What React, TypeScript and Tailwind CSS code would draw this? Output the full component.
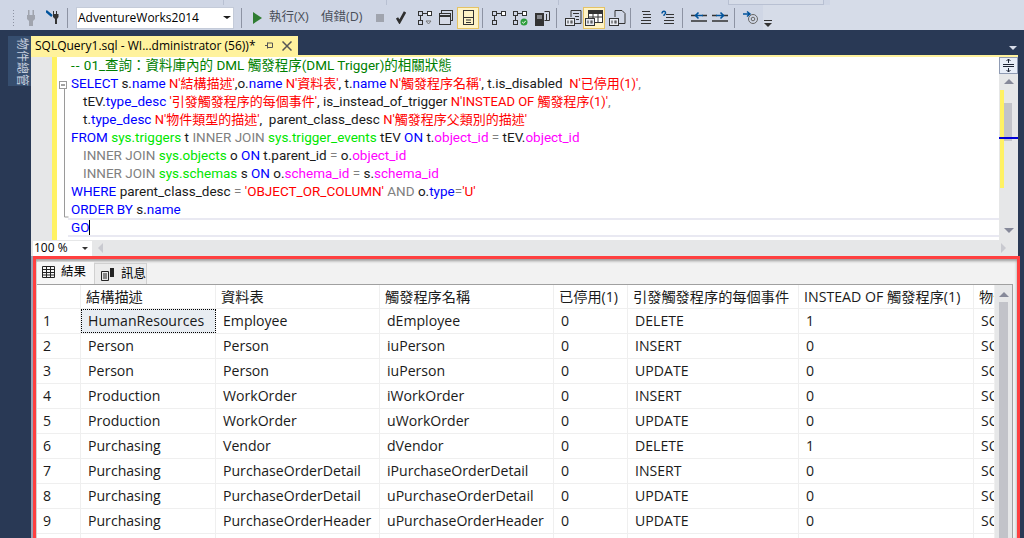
const FONT = "font-['Open_Sans','Noto_Sans_CJK_TC',sans-serif]";

type Tok = [string, string];

const B = "text-[#0000ff]";
const R = "text-[#ff0000]";
const RC = "text-[#ff0000] text-[13px]";
const G = "text-[#00e600]";
const M = "text-[#ff00ff]";
const K = "text-[#1a1a1a]";
const Y = "text-[#808080]";
const C = "text-[#008000]";

const sqlLines: { indent?: boolean; toks: Tok[] }[] = [
  { toks: [["--", "text-[#008000] tracking-[1px]"], [" 01_查詢：資料庫內的 DML 觸發程序(DML Trigger)的相關狀態", C]] },
  {
    toks: [
      ["SELECT", B], [" s.", K], ["name", B], [" N'結構描述'", RC], [",o.", K], ["name", B], [" N'資料表'", RC], [", t.", K],
      ["name", B], [" N'觸發程序名稱'", RC], [", t.is_disabled  ", K], ["N'已停用(1)'", RC], [",", Y],
    ],
  },
  {
    indent: true,
    toks: [
      ["tEV.", K], ["type_desc", B], [" '引發觸發程序的每個事件'", RC], [", is_instead_of_trigger ", K],
      ["N'INSTEAD OF 觸發程序(1)'", RC], [",", Y],
    ],
  },
  {
    indent: true,
    toks: [
      ["t.", K], ["type_desc", B], [" N'物件類型的描述'", RC], [",  parent_class_desc ", K], ["N'觸發程序父類別的描述'", RC],
    ],
  },
  {
    toks: [
      ["FROM", B], [" ", K], ["sys.triggers", G], [" t ", K], ["INNER JOIN", Y], [" ", K], ["sys.trigger_events", G], [" tEV ", K],
      ["ON", B], [" t.", K], ["object_id", M], [" = ", Y], ["tEV.", K], ["object_id", M],
    ],
  },
  {
    indent: true,
    toks: [
      ["INNER JOIN", Y], [" ", K], ["sys.objects", G], [" o ", K], ["ON", B], [" t.parent_id ", K], ["=", Y], [" o.", K], ["object_id", M],
    ],
  },
  {
    indent: true,
    toks: [
      ["INNER JOIN", Y], [" ", K], ["sys.schemas", G], [" s ", K], ["ON", B], [" o.", K], ["schema_id", M], [" = ", Y], ["s.", K], ["schema_id", M],
    ],
  },
  {
    toks: [
      ["WHERE", B], [" parent_class_desc ", K], ["=", Y], [" ", K], ["'OBJECT_OR_COLUMN'", R], [" AND ", Y], ["o.", K], ["type", B], ["=", Y], ["'U'", R],
    ],
  },
  { toks: [["ORDER BY", B], [" s.", K], ["name", B]] },
];

const columns = [
  { w: "w-[44px]", label: "" },
  { w: "w-[135px]", label: "結構描述" },
  { w: "w-[164px]", label: "資料表" },
  { w: "w-[174px]", label: "觸發程序名稱" },
  { w: "w-[74px]", label: "已停用(1)" },
  { w: "w-[171px]", label: "引發觸發程序的每個事件" },
  { w: "w-[175px]", label: "INSTEAD OF 觸發程序(1)" },
  { w: "w-[21px]", label: "物件類型的描述" },
];

const rows = [
  ["1", "HumanResources", "Employee", "dEmployee", "0", "DELETE", "1", "SQL"],
  ["2", "Person", "Person", "iuPerson", "0", "INSERT", "0", "SQL"],
  ["3", "Person", "Person", "iuPerson", "0", "UPDATE", "0", "SQL"],
  ["4", "Production", "WorkOrder", "iWorkOrder", "0", "INSERT", "0", "SQL"],
  ["5", "Production", "WorkOrder", "uWorkOrder", "0", "UPDATE", "0", "SQL"],
  ["6", "Purchasing", "Vendor", "dVendor", "0", "DELETE", "1", "SQL"],
  ["7", "Purchasing", "PurchaseOrderDetail", "iPurchaseOrderDetail", "0", "INSERT", "0", "SQL"],
  ["8", "Purchasing", "PurchaseOrderDetail", "uPurchaseOrderDetail", "0", "UPDATE", "0", "SQL"],
  ["9", "Purchasing", "PurchaseOrderHeader", "uPurchaseOrderHeader", "0", "UPDATE", "0", "SQL"],
  ["", "", "", "", "", "", "", ""],
];

function Sep({ ml }: { ml: string }) {
  return <div className={`${ml} h-[20px] w-px bg-[#8d93a3] shrink-0`} />;
}

function Plan({ check, shield }: { check?: boolean; shield?: boolean }) {
  return (
    <svg width="16" height="16" viewBox="0 0 16 16" fill="none" stroke="#333" strokeWidth="1">
      <rect x="1.5" y="1.5" width="4" height="4" />
      <rect x="10.5" y="1.5" width="4" height="4" fill="#fff" />
      <rect x="1.5" y="10.5" width="4" height="4" />
      <path d="M5.5 3.5h5M3.5 5.5v5" />
      {shield && <path d="M9 11h5l-2.5 3z" stroke="#777" />}
      {check && <circle cx="12" cy="12" r="3.5" fill="#2e9e3c" stroke="none" />}
      {check && <path d="M10.2 12l1.3 1.3 2.2-2.4" stroke="#fff" />}
    </svg>
  );
}

function TextGrid({ kind }: { kind: "text" | "grid" | "file" }) {
  return (
    <svg width="18" height="18" viewBox="0 0 18 18" fill="none" stroke="#333" strokeWidth="1">
      {kind === "text" && <path d="M6 8V1.5h10v13h-6M8 4.5h6M10 7.5h4M11 10.5h3" />}
      {kind === "grid" && (
        <>
          <rect x="3.5" y="1.5" width="14" height="12" fill="#fff" />
          <path d="M3.5 1.5h14v3h-14z" fill="#333" />
          <path d="M3.5 8h14M8 4.5v9M13 4.5v9" />
        </>
      )}
      {kind === "file" && <path d="M6 8V1.5h7l3 3v10h-6" />}
      <rect x="0.5" y="9.5" width="9" height="7" fill="#e8ebf2" />
      <path d="M3 11.5v3M6 11.5v3M7 11.5v3" />
    </svg>
  );
}

function Indent({ help }: { help?: boolean }) {
  return (
    <svg width="14" height="16" viewBox="0 0 14 16" fill="none" stroke="#333" strokeWidth="1">
      <path d="M5 4.5h8M5 7.5h8M3 10.5h10M3 13.5h10" />
      {help ? <path d="M1 3.5c0-3 4-3 3.5 0L3 5v1" stroke="#00539c" strokeWidth="1.4" /> : <path d="M4 1.5h8" />}
    </svg>
  );
}

function Comment({ reverse }: { reverse?: boolean }) {
  return (
    <svg width="16" height="14" viewBox="0 0 16 14" fill="none" stroke="#333" strokeWidth="1.6">
      <path d="M0 4.5h5M0 10h16M11 4.5h5" />
      <path d={reverse ? "M4 4.5h7M8.5 1.5l3 3-3 3" : "M12 4.5H5M7.5 1.5l-3 3 3 3"} stroke="#00539c" />
    </svg>
  );
}

function Toolbar() {
  return (
    <div className="h-[30px] shrink-0 bg-[#d6dce8] flex flex-col">
      <div className="h-[5px] flex">
        <div className="w-[10px] bg-[#cfd6e5]" />
        <div className="w-[214px] bg-[#cfd6e5] border-r border-[#b8c0d2]" />
        <div className="w-[163px] border-r border-[#b8c0d2] bg-[#cfd6e5]" />
        <div className="w-[172px] border-r border-[#b8c0d2] bg-[#cfd6e5]" />
        <div className="w-[170px] border-r border-[#b8c0d2] bg-[#cfd6e5]" />
        <div className="w-[95px] border-r border-b border-[#b8c0d2] bg-[#d6dce8]" />
        <div className="w-[6px] bg-[#cfd6e5]" />
        <div className="w-[194px] bg-[#d6dce8]" />
      </div>
      <div className="flex-1 flex">
        <div className="w-[763px] bg-[#cfd6e5] flex items-center text-[12.5px] text-[#4a4f59]">
          <div className="ml-[12px] w-[4px] h-[18px] bg-[radial-gradient(#8d93a3_1px,transparent_1px)] bg-[length:3px_3px]" />
          <svg className="ml-[11px]" width="8" height="16" viewBox="0 0 8 16" fill="#a0a4ae">
            <path d="M1 0h1.500v5H5.500V0H7v5h1v4L6 11v5H2v-5L0 9V5h1z" />
          </svg>
          <svg className="ml-[11px]" width="14" height="16" viewBox="0 0 14 16">
            <path d="M0 1l6 5" stroke="#00539c" strokeWidth="2.400" />
            <path d="M7 1h1v3h2V1h1v3h1.500v3L11 9v5H9V9L7 7z" fill="#333" />
          </svg>
          <Sep ml="ml-[7px]" />
          <div className="ml-[8px] w-[158px] h-[22px] bg-white border border-[#c4cbd9] flex items-center pl-[1px] text-[12px] text-black">
            <span className="flex-1">AdventureWorks2014</span>
            <span className="mr-[2px] w-0 h-0 border-x-[4px] border-t-[3px] border-x-transparent border-t-[#1b1b1b]" />
          </div>
          <Sep ml="ml-[7px]" />
          <svg className="ml-[11px]" width="9" height="12" viewBox="0 0 9 12" fill="#2f7d32">
            <path d="M0 0l9 6-9 6z" />
          </svg>
          <span className="ml-[7px] w-[39px] whitespace-nowrap">執行(X)</span>
          <span className="ml-[13px] w-[40px] whitespace-nowrap">偵錯(D)</span>
          <div className="ml-[15px] w-[8px] h-[8px] bg-[#a0a4ae]" />
          <svg className="ml-[12px]" width="10" height="13" viewBox="0 0 10 13" fill="none" stroke="#2f2f2f" strokeWidth="2.600">
            <path d="M1 7l2.500 4L9 1" />
          </svg>
          <div className="ml-[11px]"><Plan shield /></div>
          <svg className="ml-[6px]" width="14" height="15" viewBox="0 0 14 15" fill="none" stroke="#333" strokeWidth="1">
            <rect x="2.500" y="0.500" width="11" height="10" />
            <rect x="0.500" y="3.500" width="11" height="11" fill="#d6dae6" />
            <path d="M1 6h10" strokeWidth="2" />
          </svg>
          <div className="ml-[4px] w-[22px] h-[22px] bg-[#fef3c6] border border-[#e5c365] flex items-center justify-center">
            <svg width="11" height="15" viewBox="0 0 11 15" fill="none" stroke="#333" strokeWidth="1">
              <rect x="0.500" y="0.500" width="10" height="14" />
              <path d="M.5 7.500h10M3 10h5M3 12.500h5" />
            </svg>
          </div>
          <Sep ml="ml-[3px]" />
          <div className="ml-[8px]"><Plan /></div>
          <div className="ml-[5px]"><Plan check /></div>
          <svg className="ml-[7px]" width="15" height="16" viewBox="0 0 15 16">
            <rect x="0" y="3" width="9" height="13" fill="#333" />
            <path d="M9.500 1.500h5v9h-5M11.500 4v6" fill="none" stroke="#333" />
            <path d="M2 6h5M2 8h5" stroke="#d6dae6" />
          </svg>
          <Sep ml="ml-[6px]" />
          <div className="ml-[8px]"><TextGrid kind="text" /></div>
          <div className="w-[22px] h-[22px] bg-[#fef3c6] border border-[#e5c365] flex items-center justify-center">
            <TextGrid kind="grid" />
          </div>
          <div className="ml-[4px]"><TextGrid kind="file" /></div>
          <Sep ml="ml-[3px]" />
          <div className="ml-[7px]"><Indent /></div>
          <div className="ml-[9px]"><Indent help /></div>
          <Sep ml="ml-[7px]" />
          <div className="ml-[8px]"><Comment /></div>
          <div className="ml-[5px]"><Comment reverse /></div>
          <Sep ml="ml-[6px]" />
          <svg className="ml-[8px]" width="15" height="15" viewBox="0 0 15 15" fill="none">
            <path d="M0 4h6M4 1.500L7 4 4 6.500" stroke="#00539c" strokeWidth="1.500" />
            <circle cx="10" cy="9" r="4.500" stroke="#666" />
            <circle cx="10" cy="9" r="1.800" stroke="#666" />
          </svg>
        </div>
        <div className="pt-[15px] flex flex-col items-center w-[10px]">
          <div className="w-[8px] h-px bg-[#333]" />
          <div className="mt-[2px] w-0 h-0 border-x-[4px] border-t-[4px] border-x-transparent border-t-[#333]" />
        </div>
      </div>
    </div>
  );
}

function DocTab() {
  return (
    <div className="h-[25px] shrink-0 flex items-end justify-between">
      <div className="w-[267px] h-[19px] bg-[#fff29d] flex items-center pl-[4px] text-[12px] text-black whitespace-nowrap">
        <span className="w-[226px]">SQLQuery1.sql - WI...dministrator (56))*</span>
        <svg className="ml-[4px]" width="9" height="9" viewBox="0 0 9 9" fill="none" stroke="#555">
          <path d="M0 4.500h2.500M2.500 1.500v6M2.500 2h5v4.500h-5" />
        </svg>
        <svg className="ml-[8px]" width="10" height="10" viewBox="0 0 10 10" fill="none" stroke="#555" strokeWidth="1.500">
          <path d="M.5.500l9 9M9.500.5l-9 9" />
        </svg>
      </div>
      <div className="mb-[5px] mr-[1px] w-0 h-0 border-x-[4px] border-t-[4px] border-x-transparent border-t-[#d6dce8]" />
    </div>
  );
}

function Editor() {
  return (
    <div className="h-[183px] shrink-0 flex bg-white">
      <div className="w-[21px] bg-[#e6e7e8]" />
      <div className="w-[5px] bg-[#fff263]" />
      <div className="w-[942px] relative font-['Roboto','Noto_Sans_CJK_TC',sans-serif]">
        <div className="-mt-[1px]">
          {sqlLines.map((l, i) => (
            <div
              key={i}
              className={`h-[18px] leading-[18px] whitespace-pre text-[13.5px] ${l.indent ? "pl-[26px]" : "pl-[14px]"}`}
            >
              {l.toks.map((t, j) => (
                <span key={j} className={t[1]}>
                  {t[0]}
                </span>
              ))}
            </div>
          ))}
          <div className="ml-[11px] h-[19px] border-y-2 border-[#e9e9f2] flex items-center text-[13.5px] leading-[15px] text-[#0000ff]">
            <span className="pl-[3px]">GO</span>
            <span className="w-px h-[15px] bg-black" />
          </div>
        </div>
        <svg className="absolute left-[2px] top-[23px]" width="10" height="140" viewBox="0 0 10 140" fill="none" stroke="#9a9a9a">
          <rect x="0.500" y="1.500" width="7" height="7" fill="#fff" />
          <path d="M2 5h4" stroke="#444" />
          <path d="M5.500 9v128h4" />
        </svg>
      </div>
      <div className="flex-1 bg-[#e6e7e8] flex flex-col items-center relative">
        <div className="w-full h-[17px] bg-[#e8eef8] border border-[#8f9bb3] flex items-center justify-center">
          <svg width="11" height="13" viewBox="0 0 11 13" fill="none" stroke="#1b2333">
            <path d="M0 5.500h11M0 7.500h11M5.500 0v4M5.500 9v4M3.500 2l2-2 2 2M3.500 11l2 2 2-2" />
          </svg>
        </div>
        <div className="mt-[5px] w-0 h-0 border-x-[5px] border-b-[5px] border-x-transparent border-b-[#868999]" />
        <div className="absolute left-[5px] top-[46px] w-[8px] h-[38px] bg-[#c2c3c9]" />
        <div className="absolute left-[1px] top-[33px] w-[4px] h-[98px] bg-[#fff263]" />
        <div className="absolute left-0 top-[80px] w-full h-[2px] bg-[#0000d8]" />
        <div className="mt-auto mb-[7px] w-0 h-0 border-x-[5px] border-t-[5px] border-x-transparent border-t-[#868999]" />
      </div>
    </div>
  );
}

function ZoomBar() {
  return (
    <div className="h-[16px] shrink-0 bg-[#e6e7e8] flex items-center">
      <div className="ml-[2px] w-[59px] h-[15px] bg-white flex items-center pl-[1px] text-[12px] text-black">
        <span className="flex-1">100 %</span>
        <span className="mr-[4px] w-0 h-0 border-x-[3px] border-t-[3px] border-x-transparent border-t-[#333]" />
      </div>
      <div className="ml-[6px] w-0 h-0 border-y-[5px] border-r-[5px] border-y-transparent border-r-[#c9cad0]" />
      <div className="ml-auto mr-[12px] w-0 h-0 border-y-[5px] border-l-[5px] border-y-transparent border-l-[#c9cad0]" />
    </div>
  );
}

function Results() {
  return (
    <div className="flex-1 min-h-0 flex bg-[#9aa3b5] pl-[2px]">
      <div className="shrink-0 w-[987px] border-[3px] border-b-0 border-[#ff4040] bg-[#f2f2f2] flex flex-col overflow-hidden shadow-[inset_0_2px_3px_#9a9a9a]">
        <div className="h-[25px] shrink-0 pl-[1px] flex items-end text-[12.5px] text-black">
          <div className="w-[57px] h-[22px] pb-[2px] flex items-center pl-[5px] gap-[6px] bg-[#f7f7f7] whitespace-nowrap">
            <svg width="13" height="12" viewBox="0 0 13 12" fill="none" stroke="#222">
              <path d="M.5.500h12v11H.5zM.5 3.500h12M.5 6.500h12M.5 9h12M4.500 1v10M8.500 1v10" />
            </svg>
            <span>結果</span>
          </div>
          <div className="w-[53px] h-[21px] flex items-center pl-[6px] gap-[6px] border border-b-0 border-[#d0d0d0] bg-[#ececec] whitespace-nowrap">
            <svg width="14" height="13" viewBox="0 0 14 13" fill="none" stroke="#222">
              <path d="M.5 3.500h7v9h-7zM2 6h4M2 8h4M2 10h4" />
              <rect x="9" y="0" width="4" height="9" fill="#222" stroke="none" />
            </svg>
            <span>訊息</span>
          </div>
        </div>
        <div className="ml-[1px] mr-[4px] flex-1 min-h-0 flex border-t border-r border-[#a0a0a0] bg-white">
          <div className="w-[958px] shrink-0 overflow-hidden">
            <div className="flex h-[24px] border-b border-[#efefef] text-[14.2px] text-[#1a1a1a]">
              {columns.map((c, i) => (
                <div
                  key={i}
                  className={`${c.w} shrink-0 border-r border-[#efefef] pl-[5px] flex items-center whitespace-nowrap overflow-hidden`}
                >
                  {c.label}
                </div>
              ))}
            </div>
            {rows.map((r, i) => (
              <div key={i} className="flex h-[25px] border-b border-[#efefef] text-[14.1px] text-[#1a1a1a]">
                {r.map((v, j) => (
                  <div
                    key={j}
                    className={`${columns[j].w} shrink-0 border-r border-[#efefef] pb-[1px] flex items-center whitespace-nowrap overflow-hidden ${j === 0 ? "pl-[6px]" : "pl-[7px]"} ${i === 0 && j === 1 ? "bg-[#e8edf2] outline-1 -outline-offset-1 outline-dotted outline-black" : ""}`}
                  >
                    {v}
                  </div>
                ))}
              </div>
            ))}
          </div>
          <div className="flex-1 bg-[#e6e7e8] flex flex-col items-center">
            <div className="mt-[7px] w-0 h-0 border-x-[5px] border-b-[5px] border-x-transparent border-b-[#868999]" />
            <div className="mt-[5px] self-start ml-[4px] w-[9px] flex-1 bg-[#c2c3c9]" />
          </div>
        </div>
      </div>
    </div>
  );
}

export default function App() {
  return (
    <div className={`w-[1024px] h-[538px] overflow-hidden flex flex-col bg-[#293955] ${FONT}`}>
      <Toolbar />
      <div className="flex-1 min-h-0 flex">
        <div className="w-[31px] shrink-0 pt-[6px]">
          <div className="ml-[8px] w-[23px] h-[50px] bg-[#364e6f] text-[#c6cfdf] text-[12px] flex justify-center pt-[2px] [writing-mode:vertical-rl] [text-orientation:sideways] whitespace-nowrap">
            物件總管
          </div>
        </div>
        <div className="w-[987px] shrink-0 flex flex-col">
          <DocTab />
          <div className="h-[2px] shrink-0 bg-[#fff29d]" />
          <Editor />
          <ZoomBar />
          <Results />
        </div>
      </div>
    </div>
  );
}
